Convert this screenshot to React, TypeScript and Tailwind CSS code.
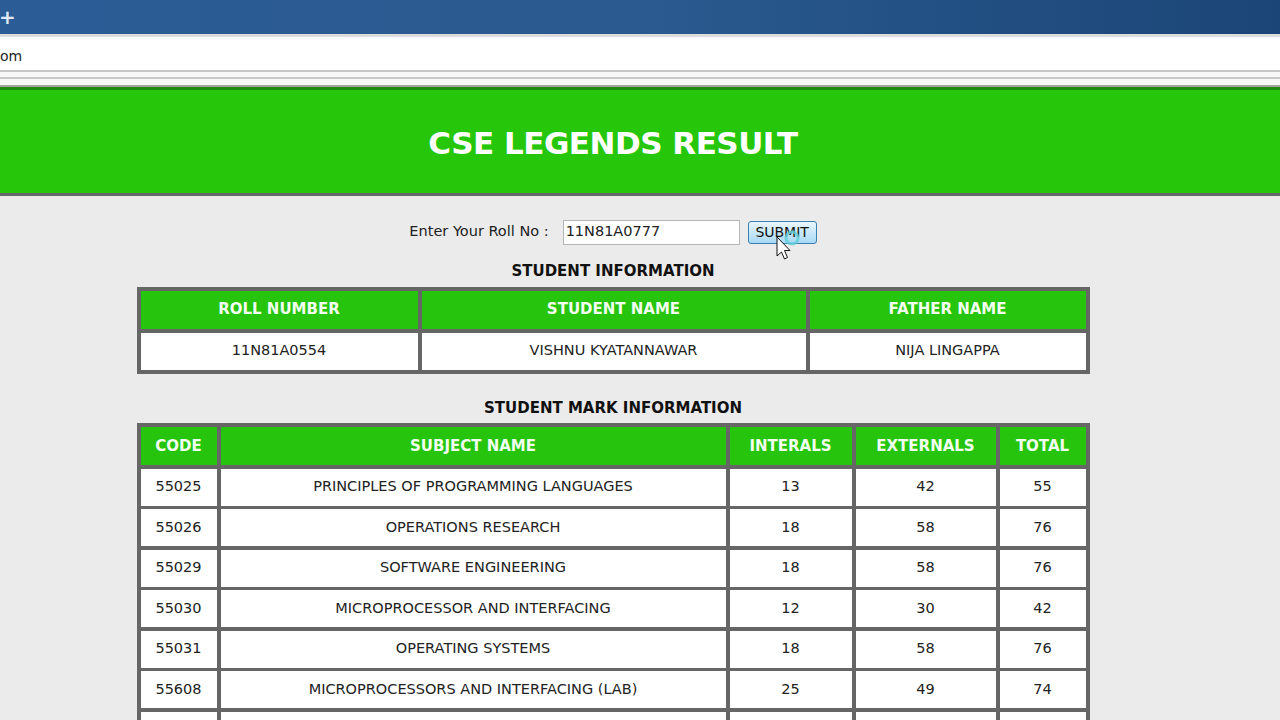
import React from 'react'

const subjects = [
  { code: '55025', name: 'PRINCIPLES OF PROGRAMMING LANGUAGES', internals: 13, externals: 42, total: 55 },
  { code: '55026', name: 'OPERATIONS RESEARCH', internals: 18, externals: 58, total: 76 },
  { code: '55029', name: 'SOFTWARE ENGINEERING', internals: 18, externals: 58, total: 76 },
  { code: '55030', name: 'MICROPROCESSOR AND INTERFACING', internals: 12, externals: 30, total: 42 },
  { code: '55031', name: 'OPERATING SYSTEMS', internals: 18, externals: 58, total: 76 },
  { code: '55608', name: 'MICROPROCESSORS AND INTERFACING (LAB)', internals: 25, externals: 49, total: 74 },
  { code: '', name: '', internals: '', externals: '', total: '' },
]

const headCell = 'bg-[#26c40c] text-[#f2fff0] text-[15px] font-bold flex items-center justify-center h-[38px]'
const bodyCell = 'bg-white text-[#222] flex items-center justify-center h-[37px]'

// arrow pointer with the busy ring, hovering the submit button
function Pointer() {
  return (
    <svg className="absolute left-[27px] top-[14px] overflow-visible" width="30" height="30" viewBox="0 0 30 30">
      <circle cx="17" cy="3" r="6" fill="none" stroke="#5fd0d8" strokeWidth="3" opacity="0.8" />
      <path d="M2 2 L2 21 L6.5 17 L9.5 24 L12.5 22.5 L9.5 15.5 L15 15.5 Z" fill="#fff" stroke="#111" strokeWidth="1" strokeLinejoin="round" />
    </svg>
  )
}

export default function App() {
  return (
    <div className="w-[1280px] h-[720px] overflow-hidden bg-[#ebebeb] font-['DejaVu_Sans',sans-serif]">
      {/* browser chrome */}
      <div className="h-[34px] bg-gradient-to-r from-[#2b5c95] via-[#2a5a8f] to-[#1b4577] flex items-center">
        <span className="text-[#dfe9f5] text-[20px] font-bold leading-none -ml-[1px]">+</span>
      </div>
      <div className="h-[3px] bg-[#dcdcdc]" />
      <div className="h-[33px] bg-white flex items-center pt-[6px]">
        <span className="text-[14px] text-[#222]">om</span>
      </div>
      <div className="h-[2px] bg-[#c6c6c6]" />
      <div className="h-[5px] bg-[#f8f8f8]" />
      <div className="h-[2px] bg-[#c9c9c9]" />
      <div className="h-[6px] bg-[#f8f8f8]" />
      <div className="h-[2px] bg-[#a8a4a0]" />

      {/* page header */}
      <div className="h-[109px] bg-[#26c70b] border-t-[3px] border-b-[3px] border-t-[#1f8a12] border-b-[#666] flex items-center justify-center pr-[54px] pt-[3px]">
        <h1 className="text-white font-bold text-[31px] tracking-[-0.5px]">CSE LEGENDS RESULT</h1>
      </div>

      <div className="w-[1226px] flex flex-col items-center text-[14.5px]">
        <div className="flex items-center mt-[23px] h-[26px]">
          <span className="text-[#222] mr-[14px]">Enter Your Roll No :</span>
          <div className="w-[177px] h-[25px] bg-white border border-[#b5b5b5] flex items-center px-[2px] text-[#222]">11N81A0777</div>
          <div className="relative ml-[8px]">
            <button className="w-[69px] h-[23px] rounded-[3px] border border-[#3c7fb1] bg-gradient-to-b from-[#eaf6fd] to-[#a7d9f5] text-[#111] text-[14px] flex items-center justify-center">SUBMIT</button>
            <Pointer />
          </div>
        </div>

        <div className="mt-[15px] font-bold text-[15px] text-[#111]">STUDENT INFORMATION</div>

        <div className="mt-[4px] w-[953px] bg-[#666] p-[4px] grid grid-cols-[277px_384px_276px] gap-[4px]">
          <div className={headCell}>ROLL NUMBER</div>
          <div className={headCell}>STUDENT NAME</div>
          <div className={headCell}>FATHER NAME</div>
          <div className={bodyCell}>11N81A0554</div>
          <div className={bodyCell}>VISHNU KYATANNAWAR</div>
          <div className={bodyCell}>NIJA LINGAPPA</div>
        </div>

        <div className="mt-[23px] font-bold text-[15px] text-[#111]">STUDENT MARK INFORMATION</div>

        <div className="mt-[4px] w-[953px] bg-[#666] p-[4px] grid grid-cols-[76px_505px_122px_140px_86px] gap-x-[4px] gap-y-[3.5px]">
          <div className={headCell}>CODE</div>
          <div className={headCell}>SUBJECT NAME</div>
          <div className={headCell}>INTERALS</div>
          <div className={headCell}>EXTERNALS</div>
          <div className={headCell}>TOTAL</div>
          {subjects.map((s, i) => (
            <React.Fragment key={i}>
              <div className={bodyCell}>{s.code}</div>
              <div className={bodyCell}>{s.name}</div>
              <div className={bodyCell}>{s.internals}</div>
              <div className={bodyCell}>{s.externals}</div>
              <div className={bodyCell}>{s.total}</div>
            </React.Fragment>
          ))}
        </div>
      </div>
    </div>
  )
}
